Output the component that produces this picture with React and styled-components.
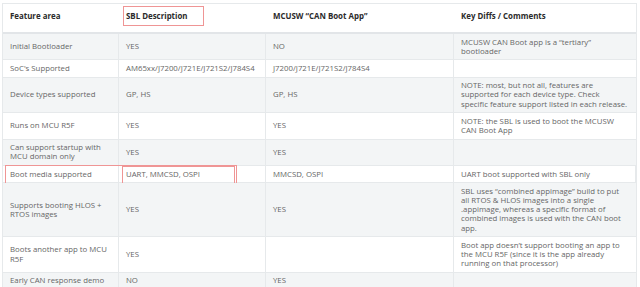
import styled, { createGlobalStyle } from "styled-components";

const Global = createGlobalStyle`
  html, body {
    margin: 0;
    padding: 0;
    background: #fff;
  }
  body {
    font-family: "Open Sans", "Liberation Sans", sans-serif;
  }
`

const Page = styled.div`
  padding: 3px 3px 0 2px;
  width: 635px;
`

const Table = styled.div`
  border: 1px solid #e6e9eb;
  border-bottom: none;
`

const Row = styled.div`
  position: relative;
  display: grid;
  grid-template-columns: 116px 147px 188px 1fr;
  background: ${(p) => (p.$shade ? "#f3f5f6" : "#fff")};
  border-bottom: 1px solid #e6e9eb;
`

const HeadRow = styled(Row)`
  height: 28px;
  border-bottom: 2px solid #e2e5e8;
`

const HeadCell = styled.div`
  position: relative;
  padding: 7px 8px 0 7px;
  font-size: 7.9px;
  line-height: 10px;
  font-weight: 700;
  color: #2b2b2b;
`

const Cell = styled.div`
  display: flex;
  align-items: center;
  padding: 3.5px 7px 3.5px 7px;
  font-size: 7.8px;
  line-height: 9.2px;
  color: #666;
  border-right: 1px solid #e6e9eb;

  &:last-child {
    border-right: none;
  }
`

const Mark = styled.span`
  position: absolute;
  left: ${(p) => p.$x}px;
  top: ${(p) => p.$y}px;
  width: ${(p) => p.$w}px;
  height: ${(p) => p.$h}px;
  border: 1px solid #ef9595;
  box-sizing: border-box;
  pointer-events: none;
`

const rows = [
  ["Initial Bootloader", "YES", "NO", "MCUSW CAN Boot app is a “tertiary” bootloader"],
  ["SoC's Supported", "AM65xx/J7200/J721E/J721S2/J784S4", "J7200/J721E/J721S2/J784S4", ""],
  [
    "Device types supported",
    "GP, HS",
    "GP, HS",
    <span>
      NOTE: most, but not all, features are supported for each device type. Check
      <br />
      specific feature support listed in each release.
    </span>,
  ],
  ["Runs on MCU R5F", "YES", "YES", "NOTE: the SBL is used to boot the MCUSW CAN Boot App"],
  ["Can support startup with MCU domain only", "YES", "YES", ""],
  ["Boot media supported", "UART, MMCSD, OSPI", "MMCSD, OSPI", "UART boot supported with SBL only"],
  ["Supports booting HLOS + RTOS images", "YES", "YES", "SBL uses “combined appimage” build to put all RTOS & HLOS images into a single .appimage, whereas a specific format of combined images is used with the CAN boot app."],
  ["Boots another app to MCU R5F", "YES", "", "Boot app doesn’t support booting an app to the MCU R5F (since it is the app already running on that processor)"],
  ["Early CAN response demo", "NO", "YES", ""],
]

function App() {
  return (
    <Page>
      <Global />
      <Table>
        <HeadRow>
          <HeadCell>Feature area</HeadCell>
          <HeadCell>
            SBL Description
            <Mark $x={4} $y={2} $w={81} $h={20} />
          </HeadCell>
          <HeadCell>MCUSW “CAN Boot App”</HeadCell>
          <HeadCell>Key Diffs / Comments</HeadCell>
        </HeadRow>
        {rows.map((r, i) => (
          <Row key={r[0]} $shade={i % 2 === 0}>
            {r.map((c, j) => (
              <Cell key={j}>{c}</Cell>
            ))}
            {r[0] === "Boot media supported" && (
              <>
                <Mark $x={2} $y={-1} $w={232} $h={19} />
                <Mark $x={119} $y={0} $w={113} $h={18} />
              </>
            )}
          </Row>
        ))}
      </Table>
    </Page>
  )
}

export default App
